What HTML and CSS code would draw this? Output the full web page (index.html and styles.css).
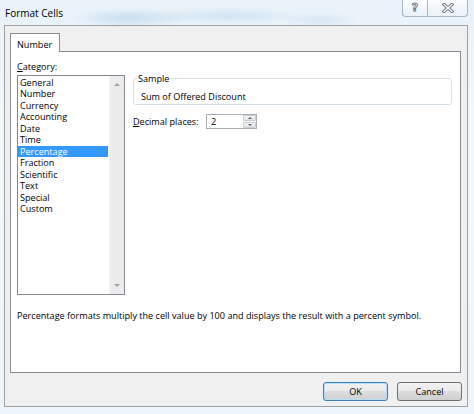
FILE: index.html
```html
<!DOCTYPE html>
<html>
<head>
<meta charset="utf-8">
<link rel="stylesheet" href="styles.css">
</head>
<body>
<div class="window">
  <div class="titlebar">
    <span class="title">Format Cells</span>
    <div class="caption">
      <div class="cap-btn help"><span class="help-glyph">?</span></div>
      <div class="cap-btn close">
        <svg width="12" height="10" viewBox="0 0 12 10">
          <path d="M2 1.5 L10 8.5 M10 1.5 L2 8.5" stroke="#6b7684" stroke-width="3.2" stroke-linecap="square" fill="none"/>
          <path d="M2 1.5 L10 8.5 M10 1.5 L2 8.5" stroke="#ffffff" stroke-width="1.4" stroke-linecap="square" fill="none"/>
        </svg>
      </div>
    </div>
  </div>
  <div class="client">
    <div class="tabs"><div class="tab">Number</div></div>
    <div class="panel">
      <div class="panel-grid">
        <div class="cat-label"><u>C</u>ategory:</div>
        <div class="listbox">
          <ul class="items">
            <li>General</li>
            <li>Number</li>
            <li>Currency</li>
            <li>Accounting</li>
            <li>Date</li>
            <li>Time</li>
            <li class="selected">Percentage</li>
            <li>Fraction</li>
            <li>Scientific</li>
            <li>Text</li>
            <li>Special</li>
            <li>Custom</li>
          </ul>
          <div class="scrollbar">
            <div class="sb-btn"><span class="tri-up"></span></div>
            <div class="sb-track"></div>
            <div class="sb-btn"><span class="tri-down"></span></div>
          </div>
        </div>
        <div class="right-col">
          <fieldset class="sample">
            <legend>Sample</legend>
            <div class="sample-text">Sum of Offered Discount</div>
          </fieldset>
          <div class="decimal-row">
            <span class="dec-label"><u>D</u>ecimal places:</span>
            <div class="spin">
              <span class="spin-value">2</span>
              <div class="spin-btns">
                <div class="spin-btn"><span class="stri-up"></span></div>
                <div class="spin-btn"><span class="stri-down"></span></div>
              </div>
            </div>
          </div>
        </div>
      </div>
      <p class="desc">Percentage formats multiply the cell value by 100 and displays the result with a percent symbol.</p>
    </div>
    <div class="buttons">
      <div class="btn default">OK</div>
      <div class="btn">Cancel</div>
    </div>
  </div>
</div>
</body>
</html>
```

FILE: styles.css
```css
html, body {
  margin: 0;
  padding: 0;
}
body {
  width: 474px;
  height: 414px;
  overflow: hidden;
  font-family: "Open Sans", "Noto Sans", sans-serif;
  font-size: 9.1px;
  color: #000;
}
.window {
  width: 474px;
  height: 414px;
  background:
    radial-gradient(ellipse 60px 10px at 130px 18px, rgba(170,205,235,0.55), rgba(170,205,235,0)),
    radial-gradient(ellipse 80px 9px at 230px 16px, rgba(185,215,240,0.5), rgba(185,215,240,0)),
    radial-gradient(ellipse 40px 8px at 320px 20px, rgba(190,218,240,0.45), rgba(190,218,240,0)),
    linear-gradient(180deg, #e9f2f9 0%, #f3f8fc 30%, #eef5fb 100%);
}
.titlebar {
  height: 25px;
  display: flex;
  justify-content: space-between;
  align-items: flex-start;
}
.title {
  font-size: 10px;
  line-height: 13px;
  margin: 7px 0 0 5px;
  color: #000;
}
.caption {
  display: flex;
  margin-right: 6px;
}
.cap-btn {
  height: 17px;
  box-sizing: border-box;
  border: 1px solid #a9b6c3;
  border-top: none;
  background: linear-gradient(180deg, rgba(255,255,255,0.85), rgba(235,241,247,0.85));
  display: flex;
  align-items: center;
  justify-content: center;
}
.help {
  width: 25px;
  border-radius: 0 0 0 4px;
  border-right: none;
}
.close {
  width: 41px;
  border-radius: 0 0 4px 0;
}
.help-glyph {
  font-family: "DejaVu Sans", sans-serif;
  font-size: 11px;
  font-weight: bold;
  line-height: 12px;
  color: #fff;
  -webkit-text-stroke: 0.9px #6b7684;
}
.client {
  margin-left: 4px;
  width: 464px;
  height: 382px;
  box-sizing: border-box;
  border: 1px solid #9c9fa3;
  background: #f0f0f0;
  padding: 7px 5px 0 5px;
}
.tabs {
  display: flex;
  height: 19px;
  margin-bottom: -1px;
  position: relative;
  z-index: 1;
}
.tab {
  width: 50px;
  height: 19px;
  box-sizing: border-box;
  border: 1px solid #898c95;
  border-bottom: none;
  background: #fff;
  padding: 4px 0 0 6px;
  line-height: 13px;
}
.panel {
  width: 451px;
  height: 322px;
  box-sizing: border-box;
  border: 1px solid #898c95;
  background: #fff;
  padding: 8px 6px 0 6px;
}
.panel-grid {
  display: grid;
  grid-template-columns: 108px 1fr;
  grid-template-rows: 13px 220px;
  column-gap: 8px;
  row-gap: 2px;
}
.cat-label {
  grid-column: 1;
  grid-row: 1;
  line-height: 13px;
}
.listbox {
  grid-column: 1;
  grid-row: 2;
  box-sizing: border-box;
  border: 1px solid #828790;
  display: flex;
  height: 220px;
}
.items {
  list-style: none;
  margin: 0;
  padding: 0.5px 1px 0 0;
  flex: 1;
}
.items li {
  line-height: 11.5px;
  height: 11.5px;
  padding-left: 2px;
  white-space: nowrap;
}
.items li.selected {
  background: #3399ff;
  color: #fff;
}
.scrollbar {
  width: 14px;
  display: flex;
  flex-direction: column;
  background: #ececec;
  border-left: 1px solid #f4f4f4;
}
.sb-btn {
  height: 17px;
  display: flex;
  align-items: center;
  justify-content: center;
}
.sb-track {
  flex: 1;
}
.tri-up, .tri-down {
  width: 0;
  height: 0;
  border-left: 3px solid transparent;
  border-right: 3px solid transparent;
}
.tri-up {
  border-bottom: 3px solid #a3a3a3;
}
.tri-down {
  border-top: 3px solid #a3a3a3;
}
.right-col {
  grid-column: 2;
  grid-row: 2;
  margin-top: -3px;
  padding-right: 2px;
}
.sample {
  margin: 0;
  padding: 5px 7px 1px 7px;
  border: 1px solid #d5dfe5;
  border-radius: 3px;
  min-width: 0;
}
.sample legend {
  padding: 0 1px;
  margin-left: -4px;
  line-height: 13px;
  color: #000;
}
.sample-text {
  line-height: 13px;
}
.decimal-row {
  display: flex;
  align-items: center;
  margin-top: 9px;
  height: 15px;
}
.dec-label {
  width: 73px;
  line-height: 13px;
}
.spin {
  width: 51px;
  height: 15px;
  box-sizing: border-box;
  border: 1px solid #abadb3;
  display: flex;
  justify-content: space-between;
  background: #fff;
}
.spin-value {
  padding-left: 4px;
  line-height: 13px;
}
.spin-btns {
  width: 13px;
  display: flex;
  flex-direction: column;
  gap: 1px;
}
.spin-btn {
  flex: 1;
  background: linear-gradient(180deg, #f5f5f5, #e4e4e4);
  border: 1px solid #c8cdd3;
  border-radius: 1px;
  display: flex;
  align-items: center;
  justify-content: center;
}
.stri-up, .stri-down {
  width: 0;
  height: 0;
  border-left: 2.5px solid transparent;
  border-right: 2.5px solid transparent;
}
.stri-up {
  border-bottom: 2.5px solid #4d6185;
}
.stri-down {
  border-top: 2.5px solid #4d6185;
}
.desc {
  margin: 14px 0 0 0;
  line-height: 13px;
  white-space: nowrap;
}
.buttons {
  display: flex;
  justify-content: flex-end;
  gap: 9px;
  margin-top: 9px;
}
.btn {
  width: 65px;
  height: 19px;
  box-sizing: border-box;
  border: 1px solid #707070;
  border-radius: 3px;
  background: linear-gradient(180deg, #f2f2f2 0%, #ebebeb 45%, #dddddd 50%, #cfcfcf 100%);
  display: flex;
  align-items: center;
  justify-content: center;
  line-height: 13px;
}
.btn.default {
  border-color: #3c7fb1;
  box-shadow: inset 0 0 0 1px #b6e0f7;
}
```
